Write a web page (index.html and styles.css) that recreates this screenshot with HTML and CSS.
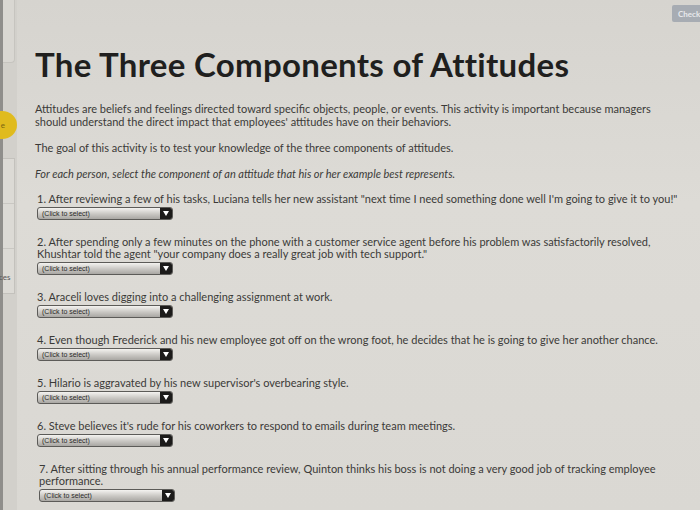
FILE: index.html
```html
<!DOCTYPE html>
<html>
<head>
<meta charset="utf-8">
<link rel="stylesheet" href="styles.css">
</head>
<body>
<div class="screen">
  <aside class="side">
    <div class="side-top"></div>
    <div class="side-dot">e</div>
    <div class="side-list">
      <div class="side-item"></div>
      <div class="side-item"></div>
      <div class="side-item last"><span>ces</span></div>
    </div>
  </aside>
  <main class="main">
    <div class="topbar"><button class="check">Check</button></div>
    <h1 class="title">The Three Components of Attitudes</h1>
    <p class="intro">Attitudes are beliefs and feelings directed toward specific objects, people, or events. This activity is important because managers should understand the direct impact that employees' attitudes have on their behaviors.</p>
    <p class="intro">The goal of this activity is to test your knowledge of the three components of attitudes.</p>
    <p class="intro italic">For each person, select the component of an attitude that his or her example best represents.</p>

    <div class="q q1">
      <p>1. After reviewing a few of his tasks, Luciana tells her new assistant "next time I need something done well I'm going to give it to you!"</p>
      <div class="sel"><span class="sel-text">(Click to select)</span><span class="sel-btn"><svg width="6" height="5" viewBox="0 0 6 5"><path d="M0 0H6L3 5Z" fill="#fff"/></svg></span></div>
    </div>
    <div class="q q2">
      <p>2. After spending only a few minutes on the phone with a customer service agent before his problem was satisfactorily resolved,<br>Khushtar told the agent "your company does a really great job with tech support."</p>
      <div class="sel"><span class="sel-text">(Click to select)</span><span class="sel-btn"><svg width="6" height="5" viewBox="0 0 6 5"><path d="M0 0H6L3 5Z" fill="#fff"/></svg></span></div>
    </div>
    <div class="q q3">
      <p>3. Araceli loves digging into a challenging assignment at work.</p>
      <div class="sel"><span class="sel-text">(Click to select)</span><span class="sel-btn"><svg width="6" height="5" viewBox="0 0 6 5"><path d="M0 0H6L3 5Z" fill="#fff"/></svg></span></div>
    </div>
    <div class="q q4">
      <p>4. Even though Frederick and his new employee got off on the wrong foot, he decides that he is going to give her another chance.</p>
      <div class="sel"><span class="sel-text">(Click to select)</span><span class="sel-btn"><svg width="6" height="5" viewBox="0 0 6 5"><path d="M0 0H6L3 5Z" fill="#fff"/></svg></span></div>
    </div>
    <div class="q q5">
      <p>5. Hilario is aggravated by his new supervisor's overbearing style.</p>
      <div class="sel"><span class="sel-text">(Click to select)</span><span class="sel-btn"><svg width="6" height="5" viewBox="0 0 6 5"><path d="M0 0H6L3 5Z" fill="#fff"/></svg></span></div>
    </div>
    <div class="q q6">
      <p>6. Steve believes it's rude for his coworkers to respond to emails during team meetings.</p>
      <div class="sel"><span class="sel-text">(Click to select)</span><span class="sel-btn"><svg width="6" height="5" viewBox="0 0 6 5"><path d="M0 0H6L3 5Z" fill="#fff"/></svg></span></div>
    </div>
    <div class="q q7">
      <p>7. After sitting through his annual performance review, Quinton thinks his boss is not doing a very good job of tracking employee<br>performance.</p>
      <div class="sel"><span class="sel-text">(Click to select)</span><span class="sel-btn"><svg width="6" height="5" viewBox="0 0 6 5"><path d="M0 0H6L3 5Z" fill="#fff"/></svg></span></div>
    </div>
  </main>
</div>
</body>
</html>
```
FILE: styles.css
```css
html, body {
  margin: 0;
  padding: 0;
}
body {
  width: 700px;
  height: 510px;
  overflow: hidden;
  background: #d9d7d2;
  font-family: Lato, "Noto Sans", sans-serif;
  color: #3b3a38;
}
.screen {
  display: flex;
  height: 510px;
  background: linear-gradient(180deg, #d6d4cf 0%, #dddbd6 40%, #dad8d3 100%);
}
.side {
  width: 17px;
  flex: none;
  border-left: 3px solid #8f8e8b;
  box-sizing: border-box;
  display: flex;
  flex-direction: column;
  position: relative;
  background: #d2d0cb;
}
.side-top {
  height: 62px;
  margin-right: 2px;
  border: 1px solid #c6c4bf;
  border-left: none;
  border-top: none;
  border-radius: 0 0 4px 0;
  background: #d9d7d2;
}
.side-dot {
  position: absolute;
  left: -16px;
  top: 111px;
  width: 30px;
  height: 28px;
  border-radius: 50%;
  background: #e0bb1e;
  color: #7a6512;
  font-size: 8px;
  line-height: 28px;
  text-align: right;
  box-sizing: border-box;
  padding-right: 12px;
  overflow: hidden;
}
.side-list {
  margin-top: 95px;
  margin-right: 2px;
  border: 1px solid #c3c1bc;
  border-left: none;
  background: #dcdad5;
}
.side-item {
  height: 44px;
  border-bottom: 1px solid #c9c7c2;
}
.side-item.last {
  border-bottom: none;
  position: relative;
}
.side-item span {
  position: absolute;
  left: -4px;
  top: 23px;
  font-size: 8px;
  color: #555;
}
.main {
  flex: 1;
  padding-left: 18px;
  padding-right: 8px;
  position: relative;
}
.topbar {
  display: flex;
  justify-content: flex-end;
  height: 0;
}
.check {
  position: absolute;
  top: 5px;
  right: -84px;
  width: 112px;
  height: 17px;
  border: none;
  border-radius: 2px;
  background: #a7acb3;
  color: #e7e9ec;
  font-family: Lato, sans-serif;
  font-size: 8px;
  font-weight: 700;
  text-align: left;
  padding-left: 6px;
}
.title {
  margin: 44px 0 0 0;
  font-size: 33px;
  line-height: 40px;
  font-weight: 700;
  color: #201f1e;
  letter-spacing: 0.3px;
}
.intro {
  margin: 18px 0 0 0;
  font-size: 11px;
  line-height: 13px;
  padding-right: 30px;
}
.intro + .intro {
  margin-top: 13px;
}
.italic {
  font-style: italic;
}
.q {
  margin-top: 13px;
  padding-left: 2px;
}
.q p {
  margin: 0;
  font-size: 11px;
  line-height: 12px;
}
.q + .q {
  margin-top: 16px;
}
.q7 {
  padding-left: 4px;
}
.sel {
  margin-top: 2px;
  width: 134px;
  height: 11px;
  display: flex;
  border: 1px solid #5c5b58;
  border-radius: 3px;
  overflow: hidden;
  background: linear-gradient(180deg, #f4f3f0 0%, #c9c7c3 55%, #a9a7a3 100%);
}
.sel-text {
  flex: 1;
  font-family: "Liberation Sans", Arial, sans-serif;
  font-size: 7px;
  line-height: 11px;
  padding-left: 4px;
  color: #2a2928;
}
.sel-btn {
  width: 12px;
  background: #1c1b1a;
  display: flex;
  align-items: center;
  justify-content: center;
}
```
